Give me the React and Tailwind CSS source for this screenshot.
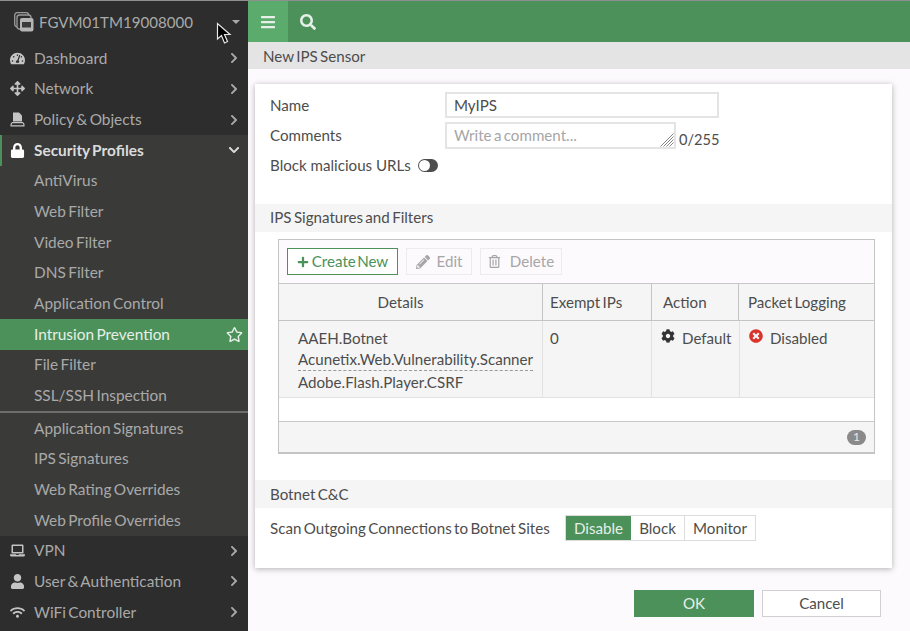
import React from 'react';
import {
  FaTachometerAlt, FaArrowsAlt, FaLock, FaUser, FaWifi, FaLaptop, FaCog, FaTimesCircle,
  FaRegTrashAlt, FaPencilAlt, FaPlus, FaSearch, FaBars, FaChevronRight, FaChevronDown, FaRegStar,
} from 'react-icons/fa';

const DeviceIcon = () => (
  <svg width="20" height="20" viewBox="0 0 20 20" fill="none" stroke="#9b9b9b" strokeWidth="1.3">
    <rect x="0.7" y="0.7" width="14" height="14" rx="2.5" />
    <rect x="3" y="3" width="14" height="14" rx="2.5" fill="#2d2d2d" />
    <rect x="6" y="6" width="13.5" height="13.5" rx="2" fill="#b5b5b5" stroke="none" />
    <rect x="8" y="10" width="9" height="5.5" fill="#3a3a3a" stroke="none" />
  </svg>
);

const PolicyIcon = () => (
  <svg width="15" height="15" viewBox="0 0 15 15" fill="#c4c4c4">
    <path d="M3 0.5h6l3 3v6H3z" />
    <path d="M2 10h11l1.5 2v2.5H0.5V12z M2.3 11.2L1.7 12.2v1.1h11.6v-1.1l-.6-1z" fillRule="evenodd" />
  </svg>
);

const Cursor = () => (
  <svg className="absolute left-[216px] top-[21px]" width="17" height="23" viewBox="0 0 17 23">
    <path d="M1.5 1.5 L1.5 17 L5.5 13.5 L8.5 21 L11.5 19.5 L8.5 12.5 L14 12.5 Z" fill="#000000" stroke="#e8e8e8" strokeWidth="1.2" />
  </svg>
);

const NavRow = ({ icon, label }) => (
  <div className="flex h-[30.67px] items-center pl-[10px] pr-[8px] text-[#a9a9a9]">
    <span className="flex w-[24px] items-center text-[#c4c4c4]">{icon}</span>
    <span className="flex-1 text-[15.4px]">{label}</span>
    <FaChevronRight size={12} />
  </div>
);

const SubRow = ({ label, active }) => (
  <div className={`flex h-[30.67px] items-center justify-between pl-[34px] pr-[5px] text-[15.4px] ${active ? 'bg-[#4b9159] text-[#e6efe8]' : 'text-[#a9a9a9]'}`}>
    <span>{label}</span>
    {active && <FaRegStar size={17} />}
  </div>
);

const Sidebar = () => (
  <div className="relative flex w-[248px] shrink-0 flex-col overflow-hidden bg-[#2d2d2d]">
    <div className="flex h-[42px] items-center pl-[14px] pr-[8px] text-[15.1px] text-[#a9a9a9]">
      <DeviceIcon />
      <span className="ml-[5px] flex-1">FGVM01TM19008000</span>
      <span className="h-0 w-0 border-x-[4px] border-t-[4px] border-x-transparent border-t-[#a9a9a9]" />
    </div>
    <NavRow icon={<FaTachometerAlt size={15} />} label="Dashboard" />
    <NavRow icon={<FaArrowsAlt size={15} />} label="Network" />
    <NavRow icon={<PolicyIcon />} label="Policy & Objects" />
    <div className="bg-[#3a3b39]">
      <div className="flex h-[30.67px] items-center border-l-2 border-[#4b9159] pl-[8px] pr-[8px] font-bold text-[#dcdcdc]">
        <span className="flex w-[24px] items-center text-white"><FaLock size={15} /></span>
        <span className="flex-1 text-[15.4px]">Security Profiles</span>
        <FaChevronDown size={12} />
      </div>
      <SubRow label="AntiVirus" />
      <SubRow label="Web Filter" />
      <SubRow label="Video Filter" />
      <SubRow label="DNS Filter" />
      <SubRow label="Application Control" />
      <SubRow label="Intrusion Prevention" active />
      <SubRow label="File Filter" />
      <SubRow label="SSL/SSH Inspection" />
      <div className="h-[2px] bg-[#6e6e6e]" />
      <SubRow label="Application Signatures" />
      <SubRow label="IPS Signatures" />
      <SubRow label="Web Rating Overrides" />
      <SubRow label="Web Profile Overrides" />
    </div>
    <NavRow icon={<FaLaptop size={15} />} label="VPN" />
    <NavRow icon={<FaUser size={15} />} label="User & Authentication" />
    <NavRow icon={<FaWifi size={15} />} label="WiFi Controller" />
    <Cursor />
  </div>
);

const Th = ({ className, children }) => (
  <div className={`flex items-center border-r border-[#c4c4c4] ${className}`}>{children}</div>
);

const SensorTable = () => (
  <div className="ml-[23px] mr-[17px] mt-[7px] border border-b-2 border-[#c4c4c4] bg-[#fdfafe] text-[15.13px]">
    <div className="flex h-[44px] items-center gap-[8px] border-b border-[#c8c8c8] pl-[8px]">
      <button className="flex h-[27px] w-[111px] items-center justify-center gap-[3px] border border-[#4b9159] bg-white text-[#4b9159] [word-spacing:-2.5px]">
        <FaPlus size={12} /> Create New
      </button>
      <button className="flex h-[27px] w-[66px] items-center justify-center gap-[7px] border border-[#ececec] text-[#a6a6a6]">
        <FaPencilAlt size={14} /> Edit
      </button>
      <button className="flex h-[27px] w-[82px] items-center justify-center gap-[9px] border border-[#ececec] text-[#a6a6a6]">
        <FaRegTrashAlt size={13} /> Delete
      </button>
    </div>
    <div className="flex h-[37px] border-b border-[#c4c4c4] bg-[#f5f5f5] text-[#4d4d4d]">
      <Th className="w-[264px] justify-center pr-[20px]">Details</Th>
      <Th className="w-[109px] pl-[7px]">Exempt IPs</Th>
      <Th className="w-[87px] pl-[11px]">Action</Th>
      <div className="flex flex-1 items-center pl-[9px]">Packet Logging</div>
    </div>
    <div className="flex h-[77px] border-b border-[#e2e2e2] bg-[#f5f5f5] text-[#4d4d4d]">
      <div className="w-[264px] border-r border-[#e2e2e2] pl-[19px] pt-[6px] leading-[22px]">
        <div>AAEH.Botnet</div>
        <div className="w-fit border-b border-dashed border-[#9a9a9a] leading-[21px]">Acunetix.Web.Vulnerability.Scanner</div>
        <div>Adobe.Flash.Player.CSRF</div>
      </div>
      <div className="w-[109px] border-r border-[#e2e2e2] pl-[7px] pt-[6px] leading-[22px]">0</div>
      <div className="flex w-[88px] items-start gap-[7px] border-r border-[#e2e2e2] pl-[9px] pt-[6px] leading-[22px]">
        <FaCog className="mt-[2px] text-[#333333]" size={14} /> Default
      </div>
      <div className="flex flex-1 items-start gap-[7px] pl-[9px] pt-[6px] leading-[22px]">
        <FaTimesCircle className="mt-[2px] text-[#d9342b]" size={14} /> Disabled
      </div>
    </div>
    <div className="h-[24px] border-b border-[#c8c8c8] bg-white" />
    <div className="flex h-[30px] items-center justify-end bg-[#f5f5f5] pr-[8px]">
      <span className="flex h-[15px] w-[19px] items-center justify-center rounded-full bg-[#8a8a8a] text-[12px] text-[#e8e8e8]">1</span>
    </div>
  </div>
);

const SectionBar = ({ className, children }) => (
  <div className={`flex h-[28px] items-center bg-[#f5f5f5] pl-[15px] text-[#4d4d4d] ${className}`}>{children}</div>
);

const Main = () => (
  <div className="flex min-w-0 flex-1 flex-col bg-[#fdfafe] text-[15.13px] text-[#4d4d4d]">
    <div className="flex h-[41px] bg-[#4b9159] text-[#e6efe8]">
      <div className="flex w-[40px] items-center justify-center bg-[#5aab6c]"><FaBars size={16} /></div>
      <div className="flex w-[40px] items-center justify-center"><FaSearch size={16} /></div>
    </div>
    <div className="flex h-[27px] items-center bg-[#e4e4e4] pl-[15px] pt-[1px]">New IPS Sensor</div>
    <div className="ml-[7px] mr-[18px] mt-[15px] h-[484px] bg-white shadow-[0_1px_6px_rgba(0,0,0,0.3)]">
      <div className="h-[120px] pl-[15px] pt-[8px]">
        <div className="flex h-[26px] items-center">
          <span className="w-[175px] pt-[1px]">Name</span>
          <div className="flex h-[26px] w-[274px] items-center border-2 border-[#e4e4e4] pl-[7px]">MyIPS</div>
        </div>
        <div className="mt-[4px] flex h-[26px] items-start">
          <span className="w-[175px] leading-[26px]">Comments</span>
          <div className="relative flex h-[27px] w-[231px] items-center border-2 border-[#e4e4e4] pl-[7px] text-[#a6a6a6]">
            Write a comment...
            <svg className="absolute bottom-0 right-0" width="14" height="14" viewBox="0 0 14 14" stroke="#777777" strokeWidth="0.9">
              <path d="M13.5 0.5L0.5 13.5M13.5 3.5L3.5 13.5M13.5 6.5L6.5 13.5M13.5 9.5L9.5 13.5" />
            </svg>
          </div>
          <span className="ml-[3px] mt-[7px] text-[14.6px]">0/255</span>
        </div>
        <div className="mt-[5px] flex h-[24px] items-center">
          <span className="[word-spacing:0px]">Block malicious URLs</span>
          <span className="relative ml-[7px] h-[13px] w-[20px] rounded-full bg-[#4d4d4d]">
            <span className="absolute left-[1px] top-[1px] h-[11px] w-[11px] rounded-full bg-white" />
          </span>
        </div>
      </div>
      <SectionBar className="pb-[2px]">IPS Signatures and Filters</SectionBar>
      <SensorTable />
      <div className="h-[26px]" />
      <SectionBar>Botnet C&amp;C</SectionBar>
      <div className="flex items-center pl-[15px] pt-[7px]">
        <span className="w-[295px]">Scan Outgoing Connections to Botnet Sites</span>
        <div className="flex h-[26px] border border-[#dcdcdc]">
          <span className="flex w-[65px] items-center justify-center bg-[#4b9159] text-[#e6efe8]">Disable</span>
          <span className="flex w-[54px] items-center justify-center border-r border-[#dcdcdc]">Block</span>
          <span className="flex w-[70px] items-center justify-center">Monitor</span>
        </div>
      </div>
    </div>
    <div className="mt-[22px] flex justify-end gap-[8px] pr-[29px]">
      <button className="h-[27px] w-[120px] bg-[#4b9159] text-[#e6efe8]">OK</button>
      <button className="h-[27px] w-[119px] border border-[#d0d0d0] bg-white">Cancel</button>
    </div>
  </div>
);

export default function App() {
  return (
    <div className="flex h-[631px] w-[910px] overflow-hidden border-t border-[#8f8f8f] font-['Lato',sans-serif] [word-spacing:-1.5px]">
      <Sidebar />
      <Main />
    </div>
  );
}
